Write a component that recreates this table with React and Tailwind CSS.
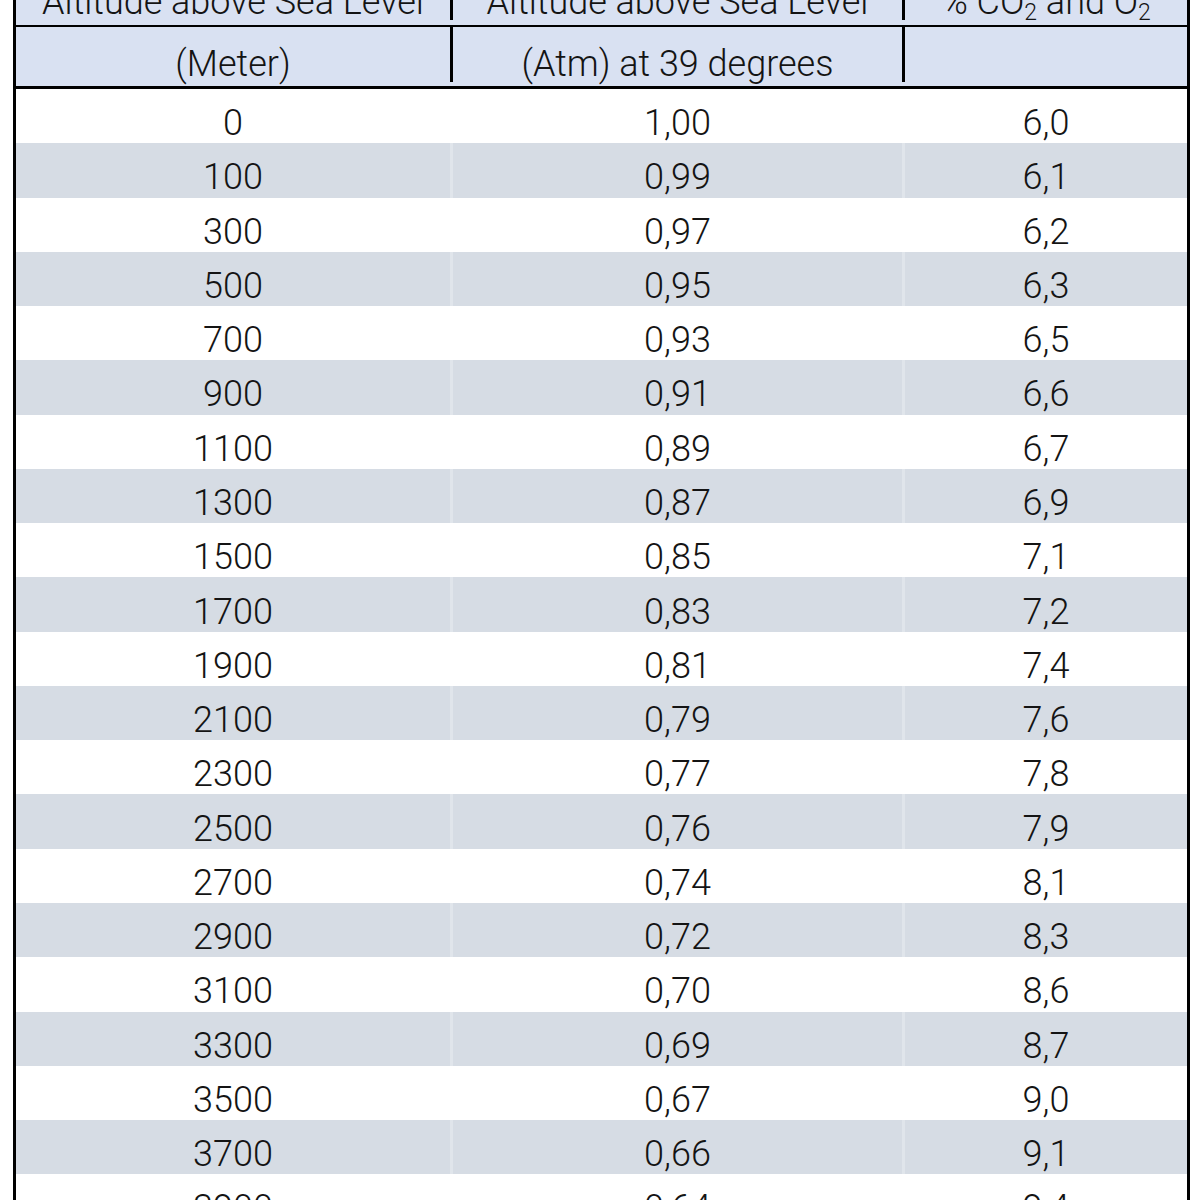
import React from 'react';

const rows = [
  ['0', '1,00', '6,0'],
  ['100', '0,99', '6,1'],
  ['300', '0,97', '6,2'],
  ['500', '0,95', '6,3'],
  ['700', '0,93', '6,5'],
  ['900', '0,91', '6,6'],
  ['1100', '0,89', '6,7'],
  ['1300', '0,87', '6,9'],
  ['1500', '0,85', '7,1'],
  ['1700', '0,83', '7,2'],
  ['1900', '0,81', '7,4'],
  ['2100', '0,79', '7,6'],
  ['2300', '0,77', '7,8'],
  ['2500', '0,76', '7,9'],
  ['2700', '0,74', '8,1'],
  ['2900', '0,72', '8,3'],
  ['3100', '0,70', '8,6'],
  ['3300', '0,69', '8,7'],
  ['3500', '0,67', '9,0'],
  ['3700', '0,66', '9,1'],
  ['3900', '0,64', '9,4'],
];

function HeaderRow({ cells, className }) {
  return (
    <div className={`flex bg-[#d9e1f2] leading-[36px] ${className}`}>
      <div className="w-[437px] border-r-[3px] border-black flex items-end justify-center">{cells[0]}</div>
      <div className="w-[452px] border-r-[3px] border-black flex items-end justify-center">{cells[1]}</div>
      <div className="w-[282px] flex items-end justify-center">{cells[2]}</div>
    </div>
  );
}

function App() {
  return (
    <div className="h-[1200px] overflow-hidden bg-white font-['Roboto',sans-serif] font-light text-[36px] leading-normal text-[#141414]">
      <div className="ml-[13px] w-[1177px] -mt-[35px] border-x-[3px] border-black">
        {/* Header */}
        <HeaderRow
          className="h-[62px] pb-[5px] border-b-2 border-black"
          cells={[
            'Altitude above Sea Level',
            'Altitude above Sea Level',
            <span>
              % CO<sub className="text-[23px]">2</sub> and O<sub className="text-[23px]">2</sub>
            </span>,
          ]}
        />
        <HeaderRow
          className="h-[62px] pb-[4px] border-b-[3px] border-black"
          cells={['(Meter)', '(Atm) at 39 degrees', '']}
        />

        {/* Data rows */}
        {rows.map((row, i) => (
          <div
            key={row[0]}
            className={`flex h-[54.28px] ${i % 2 === 1 ? 'bg-[#d6dce4]' : 'bg-white'}`}
          >
            <div className="w-[437px] border-r-[3px] border-white/25 flex items-center justify-center pt-[14px]">{row[0]}</div>
            <div className="w-[452px] border-r-[3px] border-white/25 flex items-center justify-center pt-[14px]">{row[1]}</div>
            <div className="w-[282px] flex items-center justify-center pt-[14px]">{row[2]}</div>
          </div>
        ))}
      </div>
    </div>
  );
}

export default App;
